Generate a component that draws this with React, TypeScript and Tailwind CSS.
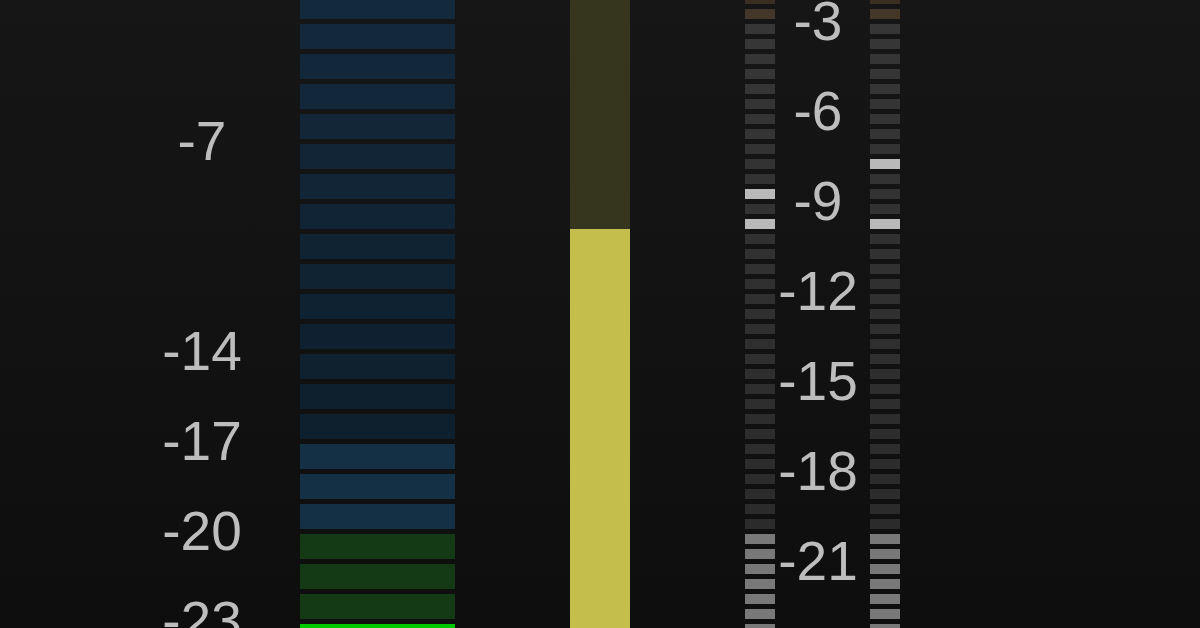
const mix = (a: number[], b: number[], t: number) =>
  `rgb(${a.map((v, i) => Math.round(v + (b[i] - v) * t)).join(',')})`;

// big meter: 22 segments, 25px tall, 5px gap
const bigSegment = (k: number) => {
  if (k <= 14) return mix([19, 41, 60], [14, 31, 45], k / 14);
  if (k <= 17) return 'rgb(20,48,68)';
  if (k <= 20) return 'rgb(19,58,20)';
  return 'rgb(0,200,0)';
};

// thin meters: 43 segments, 10px tall, 5px gap
const thinSegment = (k: number, peaks: number[]) => {
  if (k === 0) return 'rgb(58,46,34)';
  if (k === 1) return 'rgb(68,54,40)';
  if (peaks.includes(k)) return 'rgb(185,185,185)';
  if (k >= 36) return 'rgb(120,120,120)';
  return mix([54, 54, 54], [43, 43, 43], (k - 2) / 33);
};

const Label = ({ text }: { text: string }) => (
  <div className="h-[90px] leading-[90px] text-[55px] text-center text-[#bdbdbd] whitespace-nowrap">
    {text}
  </div>
);

const ThinMeter = ({ peaks }: { peaks: number[] }) => (
  <div className="w-[30px] flex flex-col gap-[5px] -mt-[6px] shrink-0">
    {Array.from({ length: 43 }, (_, k) => (
      <div key={k} className="h-[10px] shrink-0" style={{ backgroundColor: thinSegment(k, peaks) }} />
    ))}
  </div>
);

const App = () => {
  return (
    <div
      className="w-[1200px] h-[628px] overflow-hidden flex bg-gradient-to-b from-[#161616] to-[#0e0e0e] pl-[104px]"
      style={{ fontFamily: '"Liberation Sans", Arial, sans-serif' }}
    >
      {/* left scale */}
      <div className="w-[196px] flex flex-col pt-[96px] shrink-0">
        <Label text="-7" />
        <div className="h-[120px] shrink-0" />
        <Label text="-14" />
        <Label text="-17" />
        <Label text="-20" />
        <Label text="-23" />
      </div>

      {/* segmented meter */}
      <div className="w-[155px] flex flex-col gap-[5px] -mt-[6px] shrink-0">
        {Array.from({ length: 22 }, (_, k) => (
          <div key={k} className="h-[25px] shrink-0" style={{ backgroundColor: bigSegment(k) }} />
        ))}
      </div>

      {/* level bar */}
      <div className="w-[60px] ml-[115px] flex flex-col shrink-0">
        <div className="h-[229px] bg-[#36361e]" />
        <div className="flex-1 bg-[#c4be4c]" />
      </div>

      {/* stereo meters */}
      <div className="ml-[115px] flex shrink-0">
        <ThinMeter peaks={[13, 15]} />
        <div className="w-[95px] pr-[9px] flex flex-col -mt-[24px]">
          {['-3', '-6', '-9', '-12', '-15', '-18', '-21'].map((t) => (
            <Label key={t} text={t} />
          ))}
        </div>
        <ThinMeter peaks={[11, 15]} />
      </div>
    </div>
  );
};

export default App;
